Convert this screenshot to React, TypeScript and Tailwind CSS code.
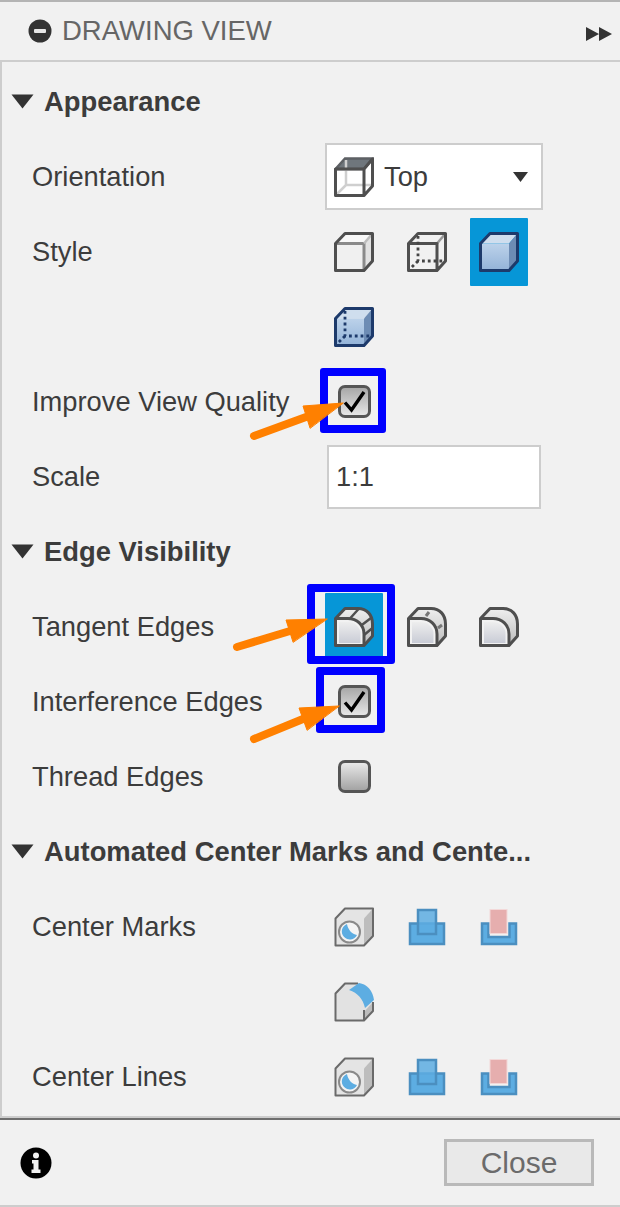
import React from "react";

const S = "#4f4f4f";

function Svg({ children }: { children: React.ReactNode }) {
  return (
    <svg width="40" height="40" viewBox="0 0 40 40" className="block shrink-0">
      {children}
    </svg>
  );
}

function Defs() {
  return (
    <svg width="0" height="0" className="absolute">
      <defs>
        <linearGradient id="blueFront" x1="0" y1="0" x2="0" y2="1">
          <stop offset="0" stopColor="#bcd2ea" />
          <stop offset="1" stopColor="#93b3d8" />
        </linearGradient>
        <linearGradient id="greyFront" x1="0" y1="0" x2="0" y2="1">
          <stop offset="0" stopColor="#eeeeee" />
          <stop offset="1" stopColor="#c9ccd6" />
        </linearGradient>
        <linearGradient id="sideGrey" x1="0" y1="0" x2="0" y2="1">
          <stop offset="0" stopColor="#efefef" />
          <stop offset="1" stopColor="#bbbbbb" />
        </linearGradient>
      </defs>
    </svg>
  );
}

function CubeOrient() {
  return (
    <Svg>
      <path d="M1.5 12 L11 1.5 H38.5 L30 12 Z" fill="#6f767c" stroke="#5d6064" strokeWidth="2.5" />
      <path d="M12 3 V28 H38 M12 28 L2 38" fill="none" stroke="#cfcfcf" strokeWidth="2.5" />
      <path d="M1.5 12 H30 V38.5 H1.5 Z M30 12 L38.5 2 V29 L30 38.5" fill="none" stroke={S} strokeWidth="3" strokeLinejoin="round" />
    </Svg>
  );
}

function CubePlain() {
  return (
    <Svg>
      <path d="M1.5 11.5 L11 1.5 H38.5 V29 L30 38.5 H1.5 Z" fill="#f0f0f0" />
      <path d="M3 11 L11.5 3 H36 L29.5 10 Z" fill="#f8f8f8" />
      <path d="M31 11 L37.5 3.5 V28.5 L31 36 Z" fill="#e2e2e2" />
      <path d="M1.5 11.5 H30 V38.5" fill="none" stroke="#8a8a8a" strokeWidth="3" />
      <path d="M30 11.5 L38.5 1.5" stroke="#bdbdbd" strokeWidth="2.5" />
      <path d="M1.5 11.5 L11 1.5 H38.5 V29 L30 38.5 H1.5 Z" fill="none" stroke={S} strokeWidth="3" strokeLinejoin="round" />
    </Svg>
  );
}

function CubeHidden() {
  return (
    <Svg>
      <path d="M1.5 11.5 L11 1.5 H38.5 V29 L30 38.5 H1.5 Z" fill="#f1f1f1" />
      <path d="M30 11.5 L38.5 1.5" stroke="#999" strokeWidth="2.5" />
      <path d="M1.5 11.5 L11 1.5 H38.5 V29 L30 38.5 H1.5 Z M1.5 11.5 H30 V38.5" fill="none" stroke={S} strokeWidth="3" strokeLinejoin="round" />
      <path d="M11 4 V29 H38 M11 29 L3 37" fill="none" stroke="#444" strokeWidth="2.8" strokeDasharray="2.8 3" />
    </Svg>
  );
}

function CubeBlue({ dotted = false }: { dotted?: boolean }) {
  return (
    <Svg>
      <path d="M1.5 11.5 L11 1.5 H38.5 L30 11.5 Z" fill="#cfdeee" />
      <path d="M30 11.5 L38.5 1.5 V29 L30 38.5 Z" fill="#6d8cb4" />
      <path d="M1.5 11.5 H30 V38.5 H1.5 Z" fill="url(#blueFront)" />
      <path d="M1.5 11.5 L11 1.5 H38.5 V29 L30 38.5 H1.5 Z" fill="none" stroke="#1d3a6b" strokeWidth="3" strokeLinejoin="round" />
      {dotted ? (
        <path d="M11 4 V29 H38 M11 29 L3 37" fill="none" stroke="#1d3a6b" strokeWidth="2.8" strokeDasharray="2.8 3" />
      ) : null}
    </Svg>
  );
}

function Fillet({ variant }: { variant: 0 | 1 | 2 }) {
  return (
    <Svg>
      <path d="M1.5 11.5 L11 1.5 H24 C33 1.5 38.5 8 38.5 17 V29 L30 38.5 H1.5 Z" fill="url(#sideGrey)" />
      <path d="M1.5 11.5 H14 C23 11.5 30 18 30 27 V38.5 H1.5 Z" fill="#f2f2f2" />
      <path d="M5 15 H14 C20 15 25 19 26.5 25 V36 H5 Z" fill="url(#greyFront)" />
      <path d="M1.5 11.5 L11 1.5 H24 C33 1.5 38.5 8 38.5 17 V29 L30 38.5 H1.5 Z" fill="none" stroke={S} strokeWidth="3" strokeLinejoin="round" />
      <path d="M1.5 11.5 H14 C23 11.5 30 18 30 27 V38.5" fill="none" stroke={S} strokeWidth="3" />
      {variant === 0 ? (
        <path d="M16 11.5 L25 1.5 M26.5 19 L37 11 M30 28 L38.5 21" fill="none" stroke={S} strokeWidth="2.5" />
      ) : null}
      {variant === 1 ? (
        <path d="M19 9 L22 5 M31 21 L35 18" fill="none" stroke="#777" strokeWidth="3" />
      ) : null}
    </Svg>
  );
}

function MarkCube() {
  return (
    <Svg>
      <path d="M1.5 11.5 L11 1.5 H39 V29 L30 38.5 H1.5 Z" fill="#e4e4e4" />
      <path d="M30 11.5 L39 1.5 V29 L30 38.5 Z" fill="#bdbdbd" />
      <path d="M1.5 11.5 L11 1.5 H39 V29 L30 38.5 H1.5 Z" fill="none" stroke="#6a6a6a" strokeWidth="2" strokeLinejoin="round" />
      <circle cx="15.5" cy="25" r="10.5" fill="#f4f4f4" stroke="#8a8a8a" strokeWidth="2" />
      <path d="M13 17 A8 8 0 1 0 23 28 C18 27 14 23 13 17 Z" fill="#5dade2" />
    </Svg>
  );
}

function MarkFillet() {
  return (
    <Svg>
      <path d="M1.5 11.5 L11 1.5 H24 C33 1.5 39 8 39 17 V29 L30 38.5 H1.5 Z" fill="#e2e2e2" />
      <path d="M30 30 L39 20 V29 L30 38.5 Z" fill="#bdbdbd" />
      <path d="M24 1.5 H11 L1.5 11.5 V38.5 H30 L39 29 V20 M30 38.5 V28" fill="none" stroke="#6a6a6a" strokeWidth="2" strokeLinejoin="round" />
      <path d="M15 8 L25 1 C33 2 39 9 40 18 L31 26 C29 17 24 11 15 8 Z" fill="#5dade2" />
    </Svg>
  );
}

function MarkBlue() {
  return (
    <Svg>
      <rect x="3" y="16.5" width="34" height="20.5" fill="#5dade2" stroke="#4b8fc0" strokeWidth="2.5" />
      <rect x="11" y="3" width="18" height="24" fill="#5dade2" fillOpacity="0.85" stroke="#4b8fc0" strokeWidth="2.5" />
    </Svg>
  );
}

function MarkRed() {
  return (
    <Svg>
      <path d="M3 16.5 H9.5 V30 H30.5 V16.5 H37 V37 H3 Z" fill="#5dade2" stroke="#4b8fc0" strokeWidth="2.5" />
      <rect x="11" y="2.5" width="17" height="24" fill="#e6aeae" stroke="#f3d8d8" strokeWidth="1" />
    </Svg>
  );
}

function IconBtn({ active, children }: { active?: boolean; children: React.ReactNode }) {
  return (
    <div className={"flex h-[68px] w-[58px] items-center justify-center rounded-[1px] " + (active ? "bg-[#0696d7]" : "")}>
      {children}
    </div>
  );
}

function Check() {
  return (
    <svg width="27" height="27" viewBox="0 0 27 27" className="block">
      <path d="M4 14.5 L10.5 22 L23 4" fill="none" stroke="#000" strokeWidth="3.4" />
    </svg>
  );
}

function Checkbox() {
  return (
    <div className="ml-[13px] flex h-[33px] w-[33px] items-center justify-center rounded-[7px] border-[3px] border-[#555555] bg-linear-to-b from-[#e8e8e8] to-[#a4a4a4]" />
  );
}

function CheckedBox() {
  return (
    <div className="ml-[13px] flex h-[33px] w-[33px] items-center justify-center rounded-[7px] border-[3px] border-[#555555] bg-linear-to-b from-[#a8a8a8] to-[#e6e6e6]">
      <Check />
    </div>
  );
}

function Heading({ children }: { children: React.ReactNode }) {
  return (
    <div className="flex h-[75px] items-center pl-[9px]">
      <svg width="23" height="15" viewBox="0 0 23 15" className="block shrink-0">
        <path d="M0.5 0.5 H22.5 L11.5 14.5 Z" fill="#333333" />
      </svg>
      <span className="ml-[10px] whitespace-nowrap text-[27.4px] font-bold text-[#3c3c3c]">{children}</span>
    </div>
  );
}

function Row({ label, children }: { label?: string; children?: React.ReactNode }) {
  return (
    <div className="flex h-[75px] items-center">
      <div className="w-[323px] shrink-0 whitespace-nowrap pl-[30px] text-[#3c3c3c]">{label}</div>
      {children}
    </div>
  );
}

function Icons({ children }: { children: React.ReactNode }) {
  return <div className="flex gap-[14.5px]">{children}</div>;
}

export default function App() {
  return (
    <div className="relative h-[1207px] w-[620px] overflow-hidden bg-[#f1f1f1] font-['Liberation_Sans',Arial,sans-serif] text-[27.3px] leading-none">
      <Defs />
      <header className="flex h-[62px] items-center border-t-2 border-b-2 border-t-[#b4b4b4] border-b-[#cdcdcd] pl-[28px] pr-[8px]">
        <svg width="24" height="24" viewBox="0 0 24 24" className="block shrink-0">
          <circle cx="12" cy="12" r="11.5" fill="#333" />
          <rect x="6" y="10" width="12" height="4" rx="1" fill="#e8e8e8" />
        </svg>
        <span className="ml-[10px] whitespace-nowrap text-[27.5px] text-[#666666]">DRAWING VIEW</span>
        <svg width="26" height="14" viewBox="0 0 26 14" className="ml-auto mt-[6px] block shrink-0">
          <path d="M0 0 L13 7 L0 14 Z M13 0 L26 7 L13 14 Z" fill="#333" />
        </svg>
      </header>

      <main className="h-[1056px] border-b-2 border-l-2 border-[#cdcdcd] pt-[2px]">
        <Heading>Appearance</Heading>
        <Row label="Orientation">
          <div className="flex h-[67px] w-[218px] items-center border-2 border-[#cdcdcd] bg-white pl-[7px] pr-[13px]">
            <CubeOrient />
            <span className="ml-[10px] text-[#3c3c3c]">Top</span>
            <svg width="15" height="10" viewBox="0 0 15 10" className="ml-auto block">
              <path d="M0 0 H15 L7.5 10 Z" fill="#333" />
            </svg>
          </div>
        </Row>
        <Row label="Style">
          <Icons>
            <IconBtn><CubePlain /></IconBtn>
            <IconBtn><CubeHidden /></IconBtn>
            <IconBtn active><CubeBlue /></IconBtn>
          </Icons>
        </Row>
        <Row>
          <Icons>
            <IconBtn><CubeBlue dotted /></IconBtn>
          </Icons>
        </Row>
        <Row label="Improve View Quality">
          <CheckedBox />
        </Row>
        <Row label="Scale">
          <div className="ml-[2px] flex h-[64px] w-[214px] items-center border-2 border-[#cdcdcd] bg-white pl-[7px] text-[#3c3c3c]">1:1</div>
        </Row>

        <Heading>Edge Visibility</Heading>
        <Row label="Tangent Edges">
          <Icons>
            <IconBtn active><Fillet variant={0} /></IconBtn>
            <IconBtn><Fillet variant={1} /></IconBtn>
            <IconBtn><Fillet variant={2} /></IconBtn>
          </Icons>
        </Row>
        <Row label="Interference Edges">
          <CheckedBox />
        </Row>
        <Row label="Thread Edges">
          <Checkbox />
        </Row>

        <Heading>Automated Center Marks and Cente...</Heading>
        <Row label="Center Marks">
          <Icons>
            <IconBtn><MarkCube /></IconBtn>
            <IconBtn><MarkBlue /></IconBtn>
            <IconBtn><MarkRed /></IconBtn>
          </Icons>
        </Row>
        <Row>
          <Icons>
            <IconBtn><MarkFillet /></IconBtn>
          </Icons>
        </Row>
        <Row label="Center Lines">
          <Icons>
            <IconBtn><MarkCube /></IconBtn>
            <IconBtn><MarkBlue /></IconBtn>
            <IconBtn><MarkRed /></IconBtn>
          </Icons>
        </Row>
      </main>

      <footer className="flex h-[89px] items-center justify-between border-t-2 border-b-2 border-t-[#6e6e6e] border-b-[#cdcdcd] pl-[20px] pr-[26px]">
        <svg width="32" height="32" viewBox="0 0 32 32" className="block shrink-0">
          <circle cx="16" cy="16" r="15.5" fill="#000" />
          <circle cx="16" cy="8.5" r="3" fill="#f1f1f1" />
          <path d="M12 13 H18.5 V22.5 H20.5 V26 H11.5 V22.5 H13.5 V16.5 H12 Z" fill="#f1f1f1" />
        </svg>
        <button className="flex h-[47px] w-[150px] items-center justify-center border-[3px] border-[#b9b9b9] bg-[#e9e9e9] text-[30px] text-[#6b6b6b]">
          Close
        </button>
      </footer>

      {/* annotation overlays */}
      <div className="absolute left-[320px] top-[368px] h-[65px] w-[66px] rounded-[3px] border-[8px] border-[#0000ff]" />
      <div className="absolute left-[307px] top-[584px] h-[80px] w-[88px] rounded-[3px] border-[8px] border-[#0000ff]" />
      <div className="absolute left-[316px] top-[667px] h-[66px] w-[69px] rounded-[3px] border-[8px] border-[#0000ff]" />
      <svg width="620" height="1207" viewBox="0 0 620 1207" className="pointer-events-none absolute left-0 top-0">
        <g fill="#ff8000" stroke="#ff8000" strokeLinecap="round">
          <path d="M254 436 L306 417" strokeWidth="8" fill="none" />
          <path d="M343 403 L303 406 L310 428 Z" strokeWidth="1" />
          <path d="M237 647 L290 631" strokeWidth="8" fill="none" />
          <path d="M327 619 L286 620 L293 642 Z" strokeWidth="1" />
          <path d="M254 739 L303 719" strokeWidth="8" fill="none" />
          <path d="M339 706 L299 708 L307 730 Z" strokeWidth="1" />
        </g>
      </svg>
    </div>
  );
}
